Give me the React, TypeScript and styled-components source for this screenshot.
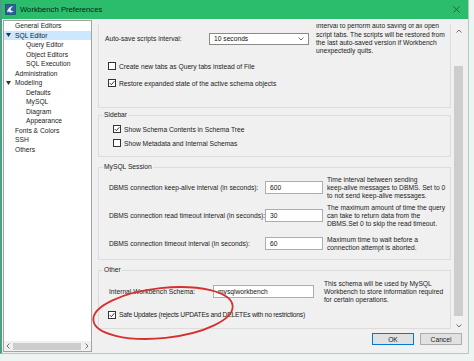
import React from 'react';
import styled, { createGlobalStyle } from 'styled-components';

const GlobalStyle = createGlobalStyle`
  html, body {
    margin: 0;
    padding: 0;
    background: #eef4f2;
  }
  body {
    font-family: "Liberation Sans", Arial, sans-serif;
    font-size: 6.7px;
    color: #111;
  }
`;

const Screen = styled.div`
  position: relative;
  width: 474px;
  height: 361px;
  overflow: hidden;
`;

const Window = styled.div`
  width: 469px;
  height: 354px;
  box-sizing: border-box;
  border-left: 2px solid #4a9f84;
  border-right: 1px solid #a8cfc2;
  border-bottom: 1px solid #a8cfc2;
  background: #f0f0f0;
  display: flex;
  flex-direction: column;
`;

const TitleBar = styled.div`
  height: 19px;
  flex: none;
  background: #2bbc6c;
  display: flex;
  align-items: center;
  padding: 0 8px 0 3px;
  gap: 4px;
`;

const Title = styled.span`
  flex: 1;
  font-size: 7.7px;
  color: #0b1f12;
`;

const Body = styled.div`
  flex: 1;
  display: flex;
  padding: 1px 0 1px 1px;
  min-height: 0;
`;

/* ---------- tree ---------- */

const Tree = styled.div`
  width: 89px;
  box-sizing: border-box;
  border: 1px solid #a3a3a3;
  background: #fff;
  display: flex;
  flex-direction: column;
`;

const TreeList = styled.div`
  flex: 1;
`;

const TreeRow = styled.div<{ $level: number; $selected?: boolean }>`
  height: 9.5px;
  display: flex;
  align-items: center;
  padding-left: ${(p) => p.$level * 11}px;
  background: ${(p) => (p.$selected ? '#cce8ff' : 'transparent')};
  color: #222;
  white-space: nowrap;
`;

const Toggle = styled.span`
  width: 11px;
  flex: none;
  display: flex;
  align-items: center;
  padding-left: 2px;
  box-sizing: border-box;
`;

const HScroll = styled.div`
  height: 10px;
  flex: none;
  background: #f0f0f0;
  display: flex;
  align-items: center;
`;

const Arrow = styled.span<{ $w: number }>`
  width: ${(p) => p.$w}px;
  flex: none;
  display: flex;
  align-items: center;
  justify-content: center;
`;

const HThumb = styled.span`
  width: 68px;
  height: 7px;
  margin-left: 1px;
  background: #cdcdcd;
`;

const HTrack = styled.span`
  flex: 1;
`;

/* ---------- right side ---------- */

const Right = styled.div`
  flex: 1;
  display: flex;
  flex-direction: column;
  padding: 4px 3px 0 3px;
  min-width: 0;
`;

const ScrollArea = styled.div`
  flex: 1;
  display: flex;
  min-height: 0;
`;

const Viewport = styled.div`
  flex: 1;
  overflow: hidden;
  min-width: 0;
`;

const Content = styled.div`
  margin-top: -1.6px;
`;

const VScroll = styled.div`
  width: 13px;
  flex: none;
  background: #f0f0f0;
  display: flex;
  flex-direction: column;
`;

const VArrow = styled.div`
  height: 13px;
  flex: none;
  display: flex;
  align-items: center;
  justify-content: center;
`;

const VTrack = styled.div`
  flex: 1;
  display: flex;
  flex-direction: column;
  align-items: center;
`;

const VThumb = styled.div<{ $top: number; $bottom: number }>`
  width: 9px;
  flex: 1;
  margin: ${(p) => p.$top}px 0 ${(p) => p.$bottom}px;
  background: #cdcdcd;
`;

const CutBox = styled.div`
  margin: 0 1px 0 3px;
  border: 1px solid #dcdcdc;
  border-top: none;
  padding-bottom: 19px;
`;

const Group = styled.fieldset<{ $gap: number; $pt: number; $pb: number }>`
  margin: ${(p) => p.$gap}px 1px 0 3px;
  min-width: 0;
  border: 1px solid #dcdcdc;
  padding: ${(p) => p.$pt}px 0 ${(p) => p.$pb}px 4px;
`;

const Legend = styled.legend`
  padding: 0 1px;
  line-height: 8px;
  color: #222;
`;

const FieldRow = styled.div<{ $label: number; $control: number; $h: number; $mt?: number }>`
  display: grid;
  grid-template-columns: ${(p) => p.$label}px ${(p) => p.$control}px auto;
  align-items: center;
  height: ${(p) => p.$h}px;
  margin-top: ${(p) => p.$mt ?? 0}px;
  padding-left: 6px;
  white-space: nowrap;
`;

const Label = styled.span`
  color: #222;
`;

const Desc = styled.div<{ $gap: number }>`
  margin-left: ${(p) => p.$gap}px;
  line-height: 8.2px;
  color: #222;
`;

const TextInput = styled.div`
  height: 13px;
  box-sizing: border-box;
  border: 1px solid #abadb3;
  background: #fff;
  padding-left: 4px;
  display: flex;
  align-items: center;
`;

const Select = styled.div`
  height: 12px;
  box-sizing: border-box;
  border: 1px solid #8a8a8a;
  background: #fff;
  padding: 0 4px;
  display: flex;
  align-items: center;
  justify-content: space-between;
`;

const CheckRow = styled.label<{ $indent: number; $mt: number; $tight?: boolean }>`
  display: flex;
  align-items: center;
  height: 10px;
  margin-top: ${(p) => p.$mt}px;
  padding-left: ${(p) => p.$indent}px;
  gap: 3px;
  color: #222;
  white-space: nowrap;
  letter-spacing: ${(p) => (p.$tight ? '-0.22px' : 'normal')};
`;

const Box = styled.span`
  width: 8px;
  height: 8px;
  box-sizing: border-box;
  border: 1px solid #333;
  background: #fff;
  display: flex;
  align-items: center;
  justify-content: center;
`;

const ButtonRow = styled.div`
  height: 20px;
  flex: none;
  display: flex;
  justify-content: flex-end;
  align-items: flex-start;
  gap: 6px;
  padding: 1px 3px 0 0;
  box-sizing: border-box;
`;

const Button = styled.div<{ $default?: boolean }>`
  width: 42px;
  height: 12px;
  box-sizing: border-box;
  border: 1px solid ${(p) => (p.$default ? '#0078d7' : '#adadad')};
  background: #e1e1e1;
  display: flex;
  align-items: center;
  justify-content: center;
  color: #222;
`;

const Annotation = styled.svg`
  position: absolute;
  left: 0;
  top: 0;
  pointer-events: none;
`;

const Chevron = ({ up }: { up?: boolean }) => (
  <svg width="6" height="4" viewBox="0 0 6 4">
    <polyline
      points={up ? '0.5,3.5 3,1 5.5,3.5' : '0.5,0.5 3,3 5.5,0.5'}
      fill="none"
      stroke="#606060"
      strokeWidth="0.9"
    />
  </svg>
);

const SideArrow = ({ left }: { left?: boolean }) => (
  <svg width="4" height="6" viewBox="0 0 4 6">
    <polyline
      points={left ? '3.5,0.5 1,3 3.5,5.5' : '0.5,0.5 3,3 0.5,5.5'}
      fill="none"
      stroke="#606060"
      strokeWidth="0.9"
    />
  </svg>
);

const Check = ({
  checked,
  indent,
  mt,
  tight,
  children,
}: {
  checked?: boolean;
  indent: number;
  mt: number;
  tight?: boolean;
  children: React.ReactNode;
}) => (
  <CheckRow $indent={indent} $mt={mt} $tight={tight}>
    <Box>
      {checked && (
        <svg width="6" height="6" viewBox="0 0 6 6">
          <polyline points="0.8,3.1 2.4,4.7 5.3,1.2" fill="none" stroke="#222" strokeWidth="0.9" />
        </svg>
      )}
    </Box>
    <span>{children}</span>
  </CheckRow>
);

const Lines = ({ lines, gap }: { lines: string[]; gap: number }) => (
  <Desc $gap={gap}>
    {lines.map((l) => (
      <div key={l}>{l}</div>
    ))}
  </Desc>
);

const tree = [
  { label: 'General Editors', level: 0 },
  { label: 'SQL Editor', level: 0, open: true, selected: true },
  { label: 'Query Editor', level: 1 },
  { label: 'Object Editors', level: 1 },
  { label: 'SQL Execution', level: 1 },
  { label: 'Administration', level: 0 },
  { label: 'Modeling', level: 0, open: true },
  { label: 'Defaults', level: 1 },
  { label: 'MySQL', level: 1 },
  { label: 'Diagram', level: 1 },
  { label: 'Appearance', level: 1 },
  { label: 'Fonts & Colors', level: 0 },
  { label: 'SSH', level: 0 },
  { label: 'Others', level: 0 },
];

const session = [
  {
    label: 'DBMS connection keep-alive interval (in seconds):',
    value: '600',
    desc: ['Time interval between sending', 'keep-alive messages to DBMS. Set to 0', 'to not send keep-alive messages.'],
  },
  {
    label: 'DBMS connection read timeout interval (in seconds):',
    value: '30',
    desc: ['The maximum amount of time the query', 'can take to return data from the', 'DBMS.Set 0 to skip the read timeout.'],
  },
  {
    label: 'DBMS connection timeout interval (in seconds):',
    value: '60',
    desc: ['Maximum time to wait before a', 'connection attempt is aborted.'],
  },
];

export default function App() {
  return (
    <Screen>
      <GlobalStyle />
      <Window>
        <TitleBar>
          <svg width="11" height="11" viewBox="0 0 11 11">
            <rect x="0.5" y="0.5" width="10" height="10" fill="#2b5f9e" stroke="#1d3f6c" strokeWidth="0.6" />
            <path d="M2 8.5 C2.5 5 4.5 2.5 8.5 2 C6.5 3.2 5.6 4.6 5.8 6.2 C6.6 7 7.8 7.4 9 7.3 C7 8.8 4.5 8.8 3.4 7.4 Z" fill="#e8f0fa" />
          </svg>
          <Title>Workbench Preferences</Title>
          <svg width="7" height="7" viewBox="0 0 7 7">
            <path d="M0.5 0.5 L6.5 6.5 M6.5 0.5 L0.5 6.5" stroke="#1f4d33" strokeWidth="0.8" />
          </svg>
        </TitleBar>
        <Body>
          <Tree>
            <TreeList>
              {tree.map((t) => (
                <TreeRow key={t.label} $level={t.level} $selected={t.selected}>
                  <Toggle>
                    {t.open && (
                      <svg width="5" height="4" viewBox="0 0 5 4">
                        <polygon points="0,0 5,0 2.5,4" fill="#333" />
                      </svg>
                    )}
                  </Toggle>
                  {t.label}
                </TreeRow>
              ))}
            </TreeList>
            <HScroll>
              <Arrow $w={8}>
                <SideArrow left />
              </Arrow>
              <HThumb />
              <HTrack />
              <Arrow $w={8}>
                <SideArrow />
              </Arrow>
            </HScroll>
          </Tree>
          <Right>
            <ScrollArea>
              <Viewport>
                <Content>
                  <CutBox>
                    <FieldRow $label={104} $control={100} $h={32.8}>
                      <Label>Auto-save scripts interval:</Label>
                      <Select>
                        <span>10 seconds</span>
                        <Chevron />
                      </Select>
                      <Lines
                        gap={7}
                        lines={[
                          'Interval to perform auto saving of all open',
                          'script tabs. The scripts will be restored from',
                          'the last auto-saved version if Workbench',
                          'unexpectedly quits.',
                        ]}
                      />
                    </FieldRow>
                    <Check indent={9} mt={5.8}>Create new tabs as Query tabs instead of File</Check>
                    <Check indent={9} mt={7} checked>
                      Restore expanded state of the active schema objects
                    </Check>
                  </CutBox>
                  <Group $gap={3} $pt={5} $pb={8}>
                    <Legend>Sidebar</Legend>
                    <Check indent={10} mt={0} checked>
                      Show Schema Contents in Schema Tree
                    </Check>
                    <Check indent={10} mt={4}>Show Metadata and Internal Schemas</Check>
                  </Group>
                  <Group $gap={6} $pt={4.7} $pb={3}>
                    <Legend>MySQL Session</Legend>
                    {session.map((s, i) => (
                      <FieldRow key={s.value} $label={156} $control={58} $h={24.6} $mt={i ? 3.4 : 0}>
                        <Label>{s.label}</Label>
                        <TextInput>{s.value}</TextInput>
                        <Lines gap={4} lines={s.desc} />
                      </FieldRow>
                    ))}
                  </Group>
                  <Group $gap={6} $pt={5.4} $pb={8}>
                    <Legend>Other</Legend>
                    <FieldRow $label={104} $control={101} $h={24.6}>
                      <Label>Internal Workbench Schema:</Label>
                      <TextInput>mysqlworkbench</TextInput>
                      <Lines
                        gap={10}
                        lines={[
                          'This schema will be used by MySQL',
                          'Workbench to store information required',
                          'for certain operations.',
                        ]}
                      />
                    </FieldRow>
                    <Check indent={5} mt={5.7} checked tight>
                      Safe Updates (rejects UPDATEs and DELETEs with no restrictions)
                    </Check>
                  </Group>
                </Content>
              </Viewport>
              <VScroll>
                <VArrow>
                  <Chevron up />
                </VArrow>
                <VTrack>
                  <VThumb $top={29} $bottom={3} />
                </VTrack>
                <VArrow>
                  <Chevron />
                </VArrow>
              </VScroll>
            </ScrollArea>
            <ButtonRow>
              <Button $default>OK</Button>
              <Button>Cancel</Button>
            </ButtonRow>
          </Right>
        </Body>
      </Window>
      <Annotation width="474" height="361" viewBox="0 0 474 361">
        <ellipse
          cx="163"
          cy="313"
          rx="70"
          ry="25"
          transform="rotate(-6 163 313)"
          fill="none"
          stroke="#d6302d"
          strokeWidth="1.8"
        />
      </Annotation>
    </Screen>
  );
}
